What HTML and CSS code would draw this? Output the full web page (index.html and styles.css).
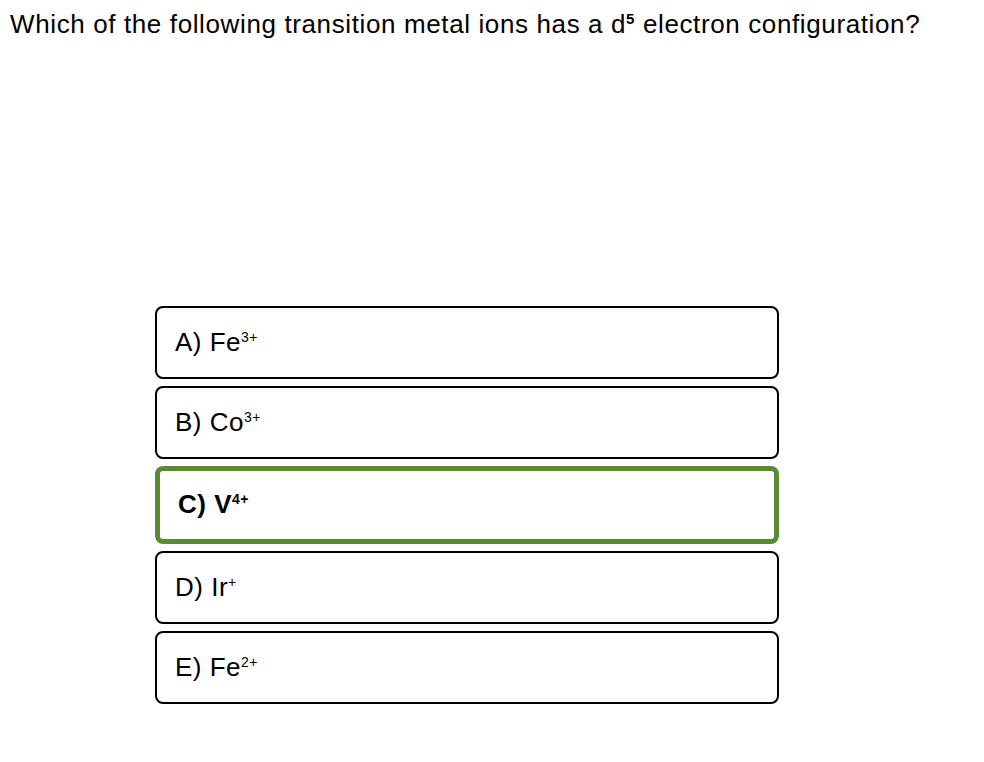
FILE: index.html
```html
<!DOCTYPE html>
<html>
<head>
<meta charset="utf-8">
<link rel="stylesheet" href="styles.css">
</head>
<body>
<div class="question">Which of the following transition metal ions has a d<sup class="exp">5</sup> electron configuration?</div>
<div class="options">
  <div class="option"><span>A) Fe<sup>3+</sup></span></div>
  <div class="option"><span>B) Co<sup>3+</sup></span></div>
  <div class="option selected"><span>C) V<sup>4+</sup></span></div>
  <div class="option"><span>D) Ir<sup>+</sup></span></div>
  <div class="option"><span>E) Fe<sup>2+</sup></span></div>
</div>
</body>
</html>
```
FILE: styles.css
```css
html, body {
  margin: 0;
  padding: 0;
  background: #ffffff;
}
body {
  font-family: "Liberation Sans", Arial, sans-serif;
  color: #000000;
}
.question {
  font-size: 26px;
  letter-spacing: 0.62px;
  padding: 9px 0 0 10px;
  line-height: 30px;
}
.question .exp {
  font-size: 15px;
  font-weight: bold;
  vertical-align: 9px;
  line-height: 0;
}
.options {
  margin: 267px 0 0 155px;
  width: 624px;
  display: flex;
  flex-direction: column;
  gap: 7.5px;
}
.option {
  box-sizing: border-box;
  height: 72.5px;
  border: 2px solid #000000;
  border-radius: 8px;
  display: flex;
  align-items: center;
  padding-left: 18px;
  font-size: 26px;
  letter-spacing: 0.5px;
}
.option sup {
  font-size: 14px;
  vertical-align: 9px;
  line-height: 0;
  letter-spacing: 0.5px;
}
.option.selected {
  height: 77.5px;
  border: 5px solid #5b8a36;
  padding-left: 18px;
  font-weight: bold;
}
```
